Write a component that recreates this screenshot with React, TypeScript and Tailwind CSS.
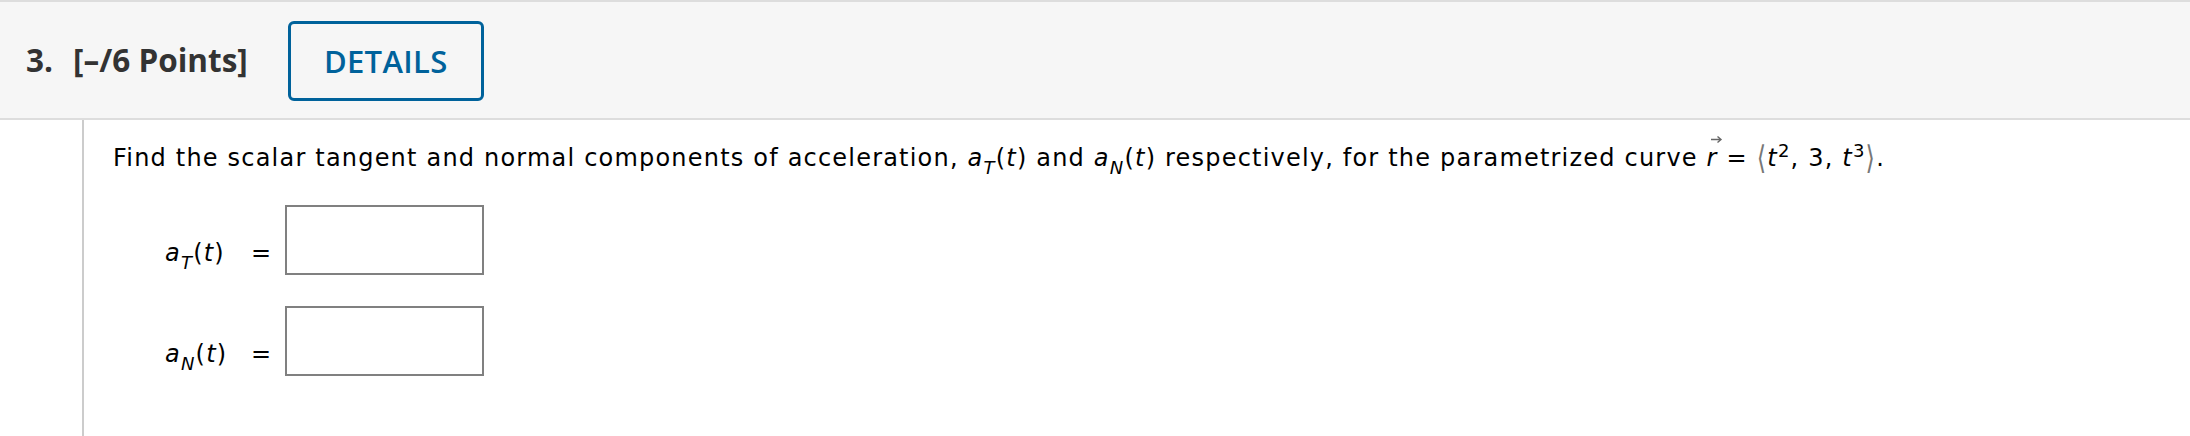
import React from 'react';

const body = { fontFamily: '"DejaVu Sans", Verdana, sans-serif' };

const Sub: React.FC<{ children: React.ReactNode }> = ({ children }) => (
  <span className="relative top-[8px] text-[18px] italic">{children}</span>
);

const Row: React.FC<{ sub: string }> = ({ sub }) => (
  <div className="flex items-center">
    <span
      className="ml-[52px] w-[86px] whitespace-nowrap pt-[26px] text-[24px] tracking-[1.2px] text-black"
      style={body}
    >
      <i>a</i>
      <Sub>{sub}</Sub>
      (<i>t</i>)
    </span>
    <span className="w-[34px] pt-[26px] text-[24px] text-black" style={body}>
      =
    </span>
    <input
      type="text"
      aria-label={`a${sub}(t)`}
      className="h-[70px] w-[199px] border-2 border-[#808080] bg-white outline-none"
    />
  </div>
);

export default function App() {
  return (
    <div className="h-[436px] w-[2190px] overflow-hidden bg-white">
      {/* header */}
      <div className="flex h-[120px] items-center border-y-2 border-[#dddddd] bg-[#f6f6f6]">
        <div
          className="ml-[26px] flex items-center text-[31.5px] font-bold text-[#333333]"
          style={{ fontFamily: '"Open Sans", sans-serif' }}
        >
          <span>3.</span>
          <span className="ml-[20px]">[–/6 Points]</span>
        </div>
        <button
          className="ml-[40px] mt-[2px] flex h-[80px] w-[196px] items-center justify-center rounded-[6px] border-[3px] border-[#00629b] text-[31px] font-semibold tracking-[0.3px] text-[#00629b]"
          style={{ fontFamily: '"Open Sans", sans-serif' }}
        >
          DETAILS
        </button>
      </div>

      {/* question */}
      <div className="flex h-[316px]">
        <div className="w-[82px]" />
        <div className="flex-1 border-l-2 border-[#cccccc] pl-[29px] pt-[22px]">
          <p
            className="whitespace-nowrap text-[24px] leading-[32px] tracking-[1.2px] text-black"
            style={body}
          >
            Find the scalar tangent and normal components of acceleration, <i>a</i>
            <Sub>T</Sub>(<i>t</i>) and <i>a</i>
            <Sub>N</Sub>(<i>t</i>) respectively, for the parametrized curve{' '}
            <span className="relative inline-block">
              <svg
                className="absolute -top-[7px] left-[3px]"
                width="13"
                height="9"
                viewBox="0 0 13 9"
                fill="none"
                stroke="#666"
                strokeWidth="1.4"
              >
                <path d="M1 4.5h10M7.5 1.5L11 4.5 7.5 7.5" />
              </svg>
              <i>r</i>
            </span>{' '}
            ={' '}
            <span className="inline-block scale-y-[1.35] text-[#777]">⟨</span>
            <i>t</i>
            <sup className="text-[18px]">2</sup>, 3, <i>t</i>
            <sup className="text-[18px]">3</sup>
            <span className="inline-block scale-y-[1.35] text-[#777]">⟩</span>.
          </p>
          <div className="mt-[29px] flex flex-col gap-[31px]">
            <Row sub="T" />
            <Row sub="N" />
          </div>
        </div>
      </div>
    </div>
  );
}
